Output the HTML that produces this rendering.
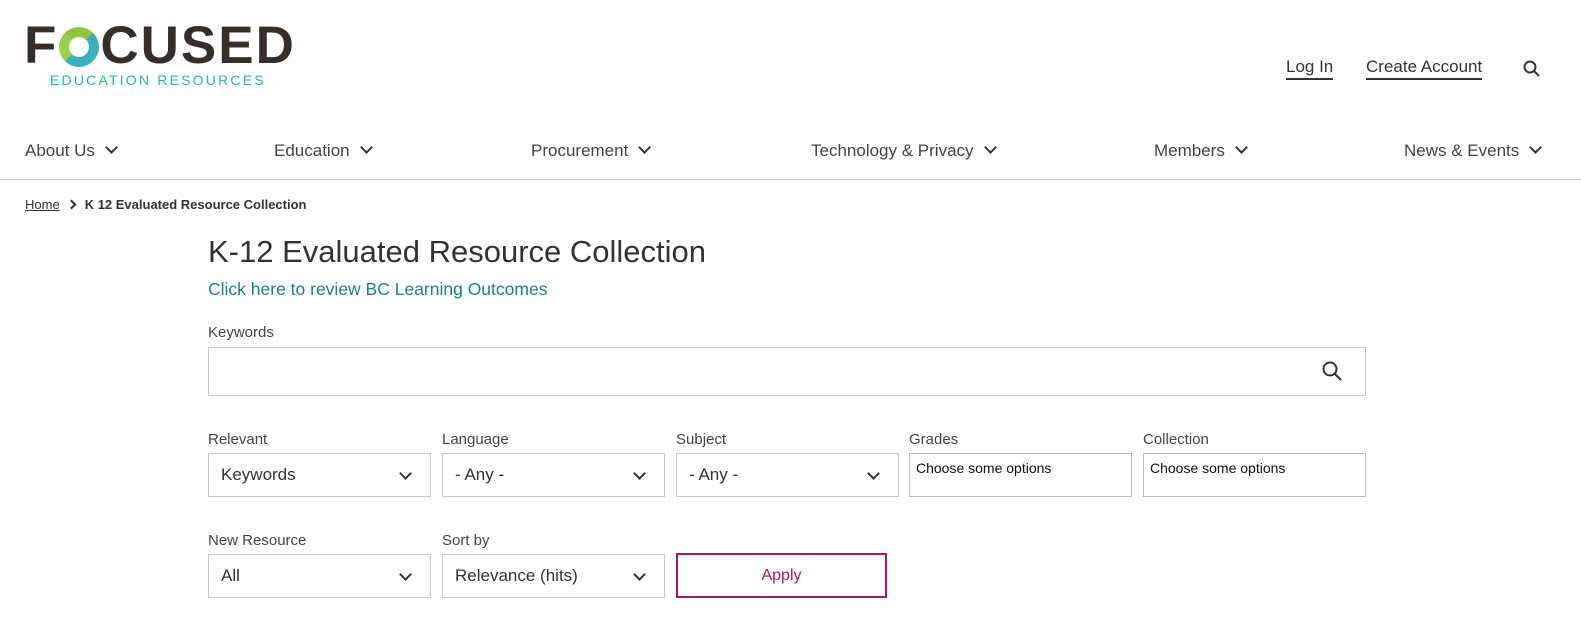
<!DOCTYPE html>
<html><head><style>
*{box-sizing:border-box;margin:0;padding:0}
body{width:1581px;height:630px;background:#fff;font-family:"Liberation Sans",sans-serif;color:#333;position:relative;overflow:hidden}
.a{position:absolute}
.logo{left:24px;top:22px;font-size:53px;font-weight:bold;color:#362e2b;letter-spacing:2px;line-height:48px}
.sub{left:50px;top:72px;font-size:14px;letter-spacing:2.2px;color:#2ab3c0}
.top{font-size:17px;color:#333;border-bottom:2px solid #333;padding-bottom:1px}
.nav{top:141px;font-size:17px;color:#444}
.chev{display:inline-block;width:9px;height:9px;border-right:2px solid #333;border-bottom:2px solid #333;transform:rotate(45deg);margin-left:12px;position:relative;top:-4px}
.lbl{font-size:15px;color:#444}
.sel{border:1px solid #c8c8c8;height:44px;width:223px;font-size:17px;color:#333;padding:11px 12px}
.sel .chev{position:absolute;right:20px;top:15px;margin:0}
.ms{border:1px solid #bbb;height:44px;width:223px;font-size:14px;color:#111;padding:6px 6px;background:#fff}
</style></head><body>
<div class="a logo">F<span style="display:inline-block;width:40px;height:40px;border-radius:50%;border:10px solid #3bb0b8;background:#fff;vertical-align:-4px;border-top-color:#8cc63f;border-left-color:#9acd50;margin:0 1px"></span>CUSED</div>
<div class="a sub">EDUCATION RESOURCES</div>
<div class="a top" style="left:1286px;top:57px">Log In</div>
<div class="a top" style="left:1366px;top:57px">Create Account</div>
<svg class="a" style="left:1523px;top:60px" width="18" height="18" viewBox="0 0 18 18"><circle cx="7" cy="7" r="5.5" fill="none" stroke="#333" stroke-width="2"/><line x1="11" y1="11" x2="16" y2="16" stroke="#333" stroke-width="2"/></svg>
<div class="a nav" style="left:25px">About Us<span class="chev"></span></div>
<div class="a nav" style="left:274px">Education<span class="chev"></span></div>
<div class="a nav" style="left:531px">Procurement<span class="chev"></span></div>
<div class="a nav" style="left:811px">Technology &amp; Privacy<span class="chev"></span></div>
<div class="a nav" style="left:1154px">Members<span class="chev"></span></div>
<div class="a nav" style="left:1404px">News &amp; Events<span class="chev"></span></div>
<div class="a" style="left:0;top:179px;width:1581px;height:1px;background:#ccc"></div>
<div class="a" style="left:25px;top:197px;font-size:13px;color:#333"><span style="text-decoration:underline">Home</span><span class="chev" style="width:7px;height:7px;transform:rotate(-45deg);margin:0 10px 0 8px;top:-1px"></span><b>K 12 Evaluated Resource Collection</b></div>
<div class="a" style="left:208px;top:234px;font-size:31px;color:#333">K-12 Evaluated Resource Collection</div>
<div class="a" style="left:208px;top:279px;font-size:17.5px;color:#1a7f8e">Click here to review BC Learning Outcomes</div>
<div class="a lbl" style="left:208px;top:324px">Keywords</div>
<div class="a" style="left:208px;top:347px;width:1158px;height:49px;border:1px solid #c8c8c8"></div>
<svg class="a" style="left:1322px;top:361px" width="20" height="20" viewBox="0 0 20 20"><circle cx="8" cy="8" r="6.5" fill="none" stroke="#333" stroke-width="2"/><line x1="13" y1="13" x2="19" y2="19" stroke="#333" stroke-width="2"/></svg>
<div class="a lbl" style="left:208px;top:431px">Relevant</div>
<div class="a lbl" style="left:442px;top:431px">Language</div>
<div class="a lbl" style="left:676px;top:431px">Subject</div>
<div class="a lbl" style="left:909px;top:431px">Grades</div>
<div class="a lbl" style="left:1143px;top:431px">Collection</div>
<div class="a sel" style="left:208px;top:453px">Keywords<span class="chev"></span></div>
<div class="a sel" style="left:442px;top:453px">- Any -<span class="chev"></span></div>
<div class="a sel" style="left:676px;top:453px">- Any -<span class="chev"></span></div>
<div class="a ms" style="left:909px;top:453px">Choose some options</div>
<div class="a ms" style="left:1143px;top:453px">Choose some options</div>
<div class="a lbl" style="left:208px;top:532px">New Resource</div>
<div class="a lbl" style="left:442px;top:532px">Sort by</div>
<div class="a sel" style="left:208px;top:554px">All<span class="chev"></span></div>
<div class="a sel" style="left:442px;top:554px">Relevance (hits)<span class="chev"></span></div>
<div class="a" style="left:676px;top:553px;width:211px;height:45px;border:2px solid #a8186a;color:#a8186a;font-size:16px;text-align:center;line-height:41px">Apply</div>
</body></html>
